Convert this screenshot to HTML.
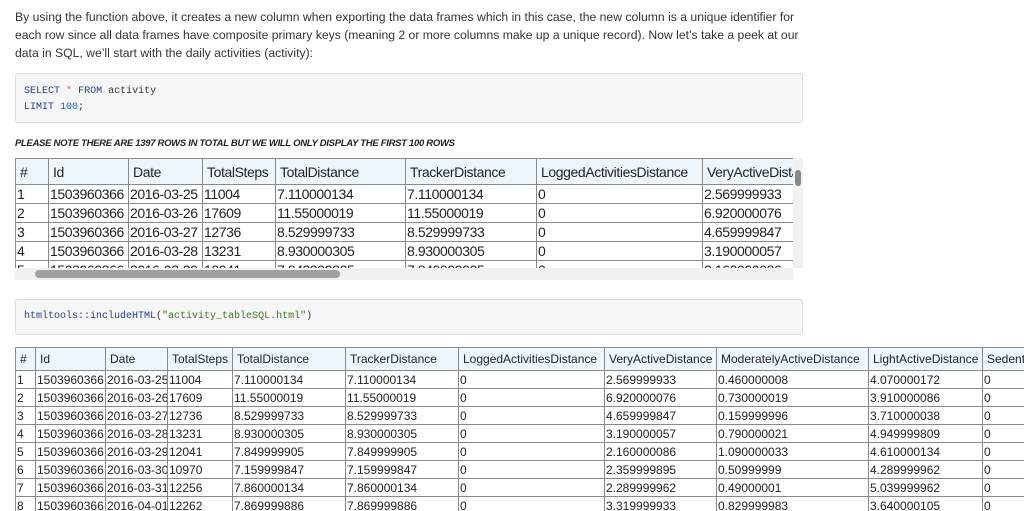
<!DOCTYPE html>
<html><head><meta charset="utf-8"><style>
body{margin:0;width:1024px;height:511px;overflow:hidden;background:#fff;font-family:"Liberation Sans",sans-serif;position:relative}
p{position:absolute;left:15px;top:8px;width:800px;margin:0;font-size:12.2px;line-height:18px;color:#333}
.code{position:absolute;left:15px;width:786px;background:#f6f6f6;border:1px solid #ddd;border-radius:3px;font-family:"Liberation Mono",monospace;font-size:10px;color:#333}
.k{color:#1f3f8f}.n{color:#1a5fd1}.s{color:#3a7d1a}
.note{position:absolute;left:15px;top:138px;font-size:9.5px;font-weight:bold;font-style:italic;color:#222;letter-spacing:-0.3px}
.wrap{position:absolute;overflow:hidden}
table{border-collapse:collapse;table-layout:fixed;font-family:"Liberation Sans",sans-serif;color:#222}
td,th{border:1px solid #8a8a8a;white-space:nowrap;overflow:hidden;padding:0 0 0 1px;text-align:left;font-weight:normal}
th{background:#eef6fd;padding-left:4px}
#t1 td,#t1 th{font-size:14px;letter-spacing:-0.4px}
#t1 th{height:25px}#t1 td{height:18px}
#t2 td,#t2 th{font-size:12px}
#t2 th{height:22px}#t2 td{height:17px}
</style></head><body>
<p>By using the function above, it creates a new column when exporting the data frames which in this case, the new column is a unique identifier for each row since all data frames have composite primary keys (meaning 2 or more columns make up a unique record). Now let’s take a peek at our data in SQL, we’ll start with the daily activities (activity):</p>
<div class="code" style="top:73px;height:48px"><div style="position:absolute;left:8px;top:10px;line-height:16px"><span class="k">SELECT</span> <span style="color:#c66">*</span> <span class="k">FROM</span> activity<br><span class="k">LIMIT</span> <span class="n">100</span>;</div></div>
<div class="note">PLEASE NOTE THERE ARE 1397 ROWS IN TOTAL BUT WE WILL ONLY DISPLAY THE FIRST 100 ROWS</div>
<div class="wrap" style="left:15px;top:158px;width:778px;height:110px">
<table id="t1" style="width:820px"><colgroup><col style="width:33px"><col style="width:80px"><col style="width:74px"><col style="width:73px"><col style="width:130px"><col style="width:131px"><col style="width:166px"><col style="width:133px"></colgroup>
<tr><th>#</th><th>Id</th><th>Date</th><th>TotalSteps</th><th>TotalDistance</th><th>TrackerDistance</th><th>LoggedActivitiesDistance</th><th>VeryActiveDistance</th></tr>
<tr><td>1</td><td>1503960366</td><td>2016-03-25</td><td>11004</td><td>7.110000134</td><td>7.110000134</td><td>0</td><td>2.569999933</td></tr>
<tr><td>2</td><td>1503960366</td><td>2016-03-26</td><td>17609</td><td>11.55000019</td><td>11.55000019</td><td>0</td><td>6.920000076</td></tr>
<tr><td>3</td><td>1503960366</td><td>2016-03-27</td><td>12736</td><td>8.529999733</td><td>8.529999733</td><td>0</td><td>4.659999847</td></tr>
<tr><td>4</td><td>1503960366</td><td>2016-03-28</td><td>13231</td><td>8.930000305</td><td>8.930000305</td><td>0</td><td>3.190000057</td></tr>
<tr><td>5</td><td>1503960366</td><td>2016-03-29</td><td>12041</td><td>7.849999905</td><td>7.849999905</td><td>0</td><td>2.160000086</td></tr>
</table></div>
<div style="position:absolute;left:793px;top:158px;width:10px;height:110px;background:#f1f1f1"><div style="position:absolute;left:2px;top:12px;width:6px;height:16px;background:#888;border-radius:3px"></div></div>
<div style="position:absolute;left:15px;top:268px;width:778px;height:12px;background:#f1f1f1"><div style="position:absolute;left:20px;top:2px;width:305px;height:8px;background:#a0a0a0;border-radius:4px"></div></div>
<div class="code" style="top:299px;height:34px"><div style="position:absolute;left:8px;top:11px"><span class="k">htmltools::includeHTML</span>(<span class="s">"activity_tableSQL.html"</span>)</div></div>
<div class="wrap" style="left:15px;top:347px;width:1009px;height:164px">
<table id="t2" style="width:1100px"><colgroup><col style="width:20px"><col style="width:70px"><col style="width:62px"><col style="width:65px"><col style="width:113px"><col style="width:113px"><col style="width:146px"><col style="width:112px"><col style="width:152px"><col style="width:114px"><col style="width:133px"></colgroup>
<tr><th>#</th><th>Id</th><th>Date</th><th>TotalSteps</th><th>TotalDistance</th><th>TrackerDistance</th><th>LoggedActivitiesDistance</th><th>VeryActiveDistance</th><th>ModeratelyActiveDistance</th><th>LightActiveDistance</th><th>SedentaryActiveDistance</th></tr>
<tr><td>1</td><td>1503960366</td><td>2016-03-25</td><td>11004</td><td>7.110000134</td><td>7.110000134</td><td>0</td><td>2.569999933</td><td>0.460000008</td><td>4.070000172</td><td>0</td></tr>
<tr><td>2</td><td>1503960366</td><td>2016-03-26</td><td>17609</td><td>11.55000019</td><td>11.55000019</td><td>0</td><td>6.920000076</td><td>0.730000019</td><td>3.910000086</td><td>0</td></tr>
<tr><td>3</td><td>1503960366</td><td>2016-03-27</td><td>12736</td><td>8.529999733</td><td>8.529999733</td><td>0</td><td>4.659999847</td><td>0.159999996</td><td>3.710000038</td><td>0</td></tr>
<tr><td>4</td><td>1503960366</td><td>2016-03-28</td><td>13231</td><td>8.930000305</td><td>8.930000305</td><td>0</td><td>3.190000057</td><td>0.790000021</td><td>4.949999809</td><td>0</td></tr>
<tr><td>5</td><td>1503960366</td><td>2016-03-29</td><td>12041</td><td>7.849999905</td><td>7.849999905</td><td>0</td><td>2.160000086</td><td>1.090000033</td><td>4.610000134</td><td>0</td></tr>
<tr><td>6</td><td>1503960366</td><td>2016-03-30</td><td>10970</td><td>7.159999847</td><td>7.159999847</td><td>0</td><td>2.359999895</td><td>0.50999999</td><td>4.289999962</td><td>0</td></tr>
<tr><td>7</td><td>1503960366</td><td>2016-03-31</td><td>12256</td><td>7.860000134</td><td>7.860000134</td><td>0</td><td>2.289999962</td><td>0.49000001</td><td>5.039999962</td><td>0</td></tr>
<tr><td>8</td><td>1503960366</td><td>2016-04-01</td><td>12262</td><td>7.869999886</td><td>7.869999886</td><td>0</td><td>3.319999933</td><td>0.829999983</td><td>3.640000105</td><td>0</td></tr>
</table></div>
</body></html>
